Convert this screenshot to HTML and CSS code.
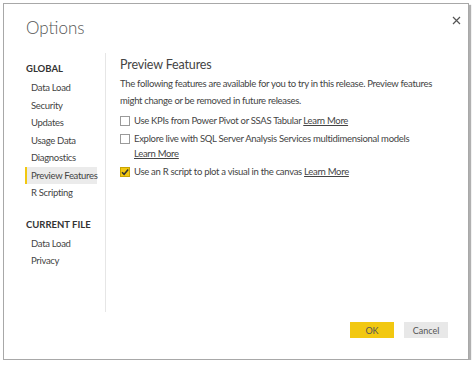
FILE: index.html
```html
<!DOCTYPE html>
<html>
<head>
<meta charset="utf-8">
<link rel="stylesheet" href="styles.css">
</head>
<body>
<div class="dialog">
  <div class="header">
    <div class="title">Options</div>
    <div class="close"><svg width="9" height="9" viewBox="0 0 9 9"><path d="M1 1L8 8M8 1L1 8" stroke="#555" stroke-width="1.2"/></svg></div>
  </div>
  <div class="main">
    <div class="nav">
      <div class="nav-head">GLOBAL</div>
      <div class="nav-item">Data Load</div>
      <div class="nav-item">Security</div>
      <div class="nav-item">Updates</div>
      <div class="nav-item">Usage Data</div>
      <div class="nav-item">Diagnostics</div>
      <div class="nav-item selected">Preview Features</div>
      <div class="nav-item">R Scripting</div>
      <div class="nav-head second">CURRENT FILE</div>
      <div class="nav-item">Data Load</div>
      <div class="nav-item">Privacy</div>
    </div>
    <div class="content">
      <div class="heading">Preview Features</div>
      <p class="desc">The following features are available for you to try in this release. Preview features might change or be removed in future releases.</p>
      <div class="option"><span class="box"></span><span class="label">Use KPIs from Power Pivot or SSAS Tabular <a class="link">Learn More</a></span></div>
      <div class="option"><span class="box"></span><span class="label">Explore live with SQL Server Analysis Services multidimensional models<br><a class="link">Learn More</a></span></div>
      <div class="option"><span class="box checked"><svg width="10" height="10" viewBox="0 0 10 10"><path d="M2 5.2L4.1 7.3L8.2 2.6" fill="none" stroke="#333" stroke-width="1.5"/></svg></span><span class="label">Use an R script to plot a visual in the canvas <a class="link">Learn More</a></span></div>
    </div>
  </div>
  <div class="footer">
    <button class="btn ok">OK</button>
    <button class="btn cancel">Cancel</button>
  </div>
</div>
</body>
</html>
```
FILE: styles.css
```css
html, body {
  margin: 0;
  padding: 0;
  background: #ffffff;
}
body {
  font-family: "Lato", "Open Sans", sans-serif;
  color: #444;
}
.dialog {
  margin: 3px 0 0 3px;
  width: 464px;
  height: 355px;
  border: 1px solid #a8a8a8;
  box-shadow: 2px 2px 1px #b0b0b0;
  display: flex;
  flex-direction: column;
  background: #fff;
}
.header {
  height: 49px;
  display: flex;
  justify-content: space-between;
  align-items: flex-start;
}
.title {
  font-size: 17px;
  font-weight: 300;
  color: #555;
  margin: 13px 0 0 22px;
  line-height: 22px;
}
.close {
  margin: 5px 7px 0 0;
  width: 9px;
  height: 9px;
}
.main {
  height: 259px;
  display: flex;
}
.nav {
  width: 80px;
  padding: 7px 0 0 21px;
  border-right: 1px solid #e6e6e6;
  font-size: 9.5px;
  letter-spacing: -0.3px;
}
.nav-head {
  font-weight: 700;
  color: #333;
  line-height: 17px;
  margin: 0 0 2px 1px;
  font-size: 9.5px;
  letter-spacing: 0;
}
.nav-head.second {
  margin-top: 14px;
}
.nav-item {
  line-height: 17.5px;
  height: 17.5px;
  padding-left: 6px;
  width: 66px;
  color: #444;
  white-space: nowrap;
}
.nav-item.selected {
  background: #ebebeb;
  border-left: 2px solid #f2c811;
  padding-left: 4px;
}
.content {
  flex: 1;
  padding: 2px 0 0 14px;
  font-size: 9.5px;
  letter-spacing: -0.3px;
}
.heading {
  font-size: 12.5px;
  letter-spacing: -0.15px;
  color: #444;
  line-height: 20px;
}
.desc {
  margin: 0 0 2px 0;
  line-height: 17px;
  color: #444;
  width: 320px;
}
.option {
  display: flex;
  align-items: flex-start;
  line-height: 15px;
  padding: 1.5px 0;
}
.box {
  width: 8px;
  height: 8px;
  border: 1px solid #9a9a9a;
  margin: 3px 4px 0 0;
  flex: none;
  position: relative;
}
.box.checked {
  background: #f2c811;
  border-color: #c9a400;
}
.box svg {
  position: absolute;
  left: -1px;
  top: -1px;
}
.link {
  text-decoration: underline;
  color: #444;
}
.footer {
  display: flex;
  justify-content: flex-end;
  gap: 10px;
  padding: 10px 20px 0 0;
}
.btn {
  width: 44px;
  height: 16px;
  border: none;
  font-family: "Lato", sans-serif;
  font-size: 9px;
  padding: 0;
  color: #555;
}
.btn.ok {
  background: #f2c811;
}
.btn.cancel {
  background: #e8e8e8;
}
```
